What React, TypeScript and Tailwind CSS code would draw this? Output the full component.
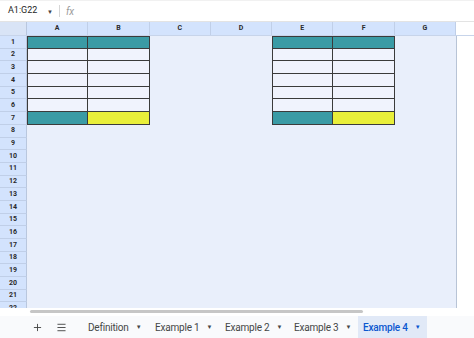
import React from 'react';
import { Plus, Menu } from 'lucide-react';

const COLS = ['A', 'B', 'C', 'D', 'E', 'F', 'G'];
const ROWS = Array.from({ length: 22 }, (_, i) => i + 1);
const TABS = [
  { name: 'Definition', w: 'w-[67px]' },
  { name: 'Example 1', w: 'w-[70px]' },
  { name: 'Example 2', w: 'w-[69px]' },
  { name: 'Example 3', w: 'w-[69px]' },
  { name: 'Example 4', w: 'w-[69px]' },
];

const TEAL = 'bg-[#3a9ba5]';
const YELLOW = 'bg-[#e9ef3a]';

// table in A:B and E:F, rows 1..7
const cellClass = (row: number, col: number) => {
  const inTable = row <= 7 && (col === 0 || col === 1 || col === 4 || col === 5);
  if (!inTable) return 'bg-[#e9effb]';
  const left = col === 0 || col === 4;
  let fill = 'bg-[#f0f3fd]';
  if (row === 1) fill = TEAL;
  if (row === 7) fill = left ? TEAL : YELLOW;
  const borders = [
    'border-b border-b-[#3b3b3b]',
    row === 1 ? 'border-t border-t-[#3b3b3b]' : '',
    'border-r border-r-[#3b3b3b]',
    left ? 'border-l border-l-[#3b3b3b]' : '',
  ].join(' ');
  return `${fill} ${borders}`;
};

export default function App() {
  return (
    <div className="w-[474px] h-[338px] overflow-hidden bg-white flex flex-col font-['Roboto',sans-serif] text-[#1f1f1f]">
      {/* formula bar */}
      <div className="h-[22px] flex items-center border-t border-t-[#f1f1f1] border-b border-b-[#e3e3e3] text-[9px]">
        <span className="w-[47px] pl-[8px]">A1:G22</span>
        <span className="text-[6px] text-[#444]">▼</span>
        <span className="ml-[6px] h-[12px] w-px bg-[#d6d6d6]" />
        <span className="ml-[6px] italic text-[#9a9a9a] font-['Liberation Serif',serif] text-[10px]">fx</span>
      </div>

      {/* column headers */}
      <div className="h-[14px] flex border-b border-b-[#c7d4ea]">
        <div className="w-[27px] shrink-0 bg-[#d9e4f6] border-r border-r-[#b9c7de]" />
        {COLS.map(c => (
          <div
            key={c}
            className="w-[61.3px] shrink-0 bg-[#d3e3fd] border-r border-r-[#c0cfe8] flex items-center justify-center text-[7px] font-bold text-[#2a2a2a]"
          >
            {c}
          </div>
        ))}
        <div className="flex-1 bg-white" />
      </div>

      {/* grid body */}
      <div className="h-[272px] overflow-hidden">
        {ROWS.map(r => (
          <div key={r} className="h-[12.7px] flex">
            <div className="w-[27px] shrink-0 bg-[#d3e3fd] border-r border-r-[#b9c7de] border-b border-b-[#c0cfe8] flex items-center justify-center text-[7px] font-bold text-[#2a2a2a]">
              {r}
            </div>
            {COLS.map((c, ci) => (
              <div key={c} className={`w-[61.3px] shrink-0 ${cellClass(r, ci)}`} />
            ))}
            <div className="flex-1 bg-white border-l border-l-[#b8c4d6]" />
          </div>
        ))}
      </div>

      {/* scrollbar strip */}
      <div className="h-[8px] bg-white pl-[30px] pt-[2px]">
        <div className="w-[333px] h-[3px] rounded-full bg-[#c6c6c6]" />
      </div>

      {/* sheet tabs */}
      <div className="h-[22px] flex items-stretch bg-[#f9fafc] text-[10px] text-[#444746]">
        <div className="w-[83px] shrink-0 flex items-center pl-[32px] gap-[13px] text-[#444]">
          <Plus size={11} strokeWidth={2} />
          <Menu size={11} strokeWidth={2} />
        </div>
        {TABS.map((t, i) => {
          const active = i === TABS.length - 1;
          return (
            <div
              key={t.name}
              className={`${t.w} shrink-0 flex items-center gap-[7px] pl-[5px] ${
                active ? 'bg-[#e1e9f7] text-[#0b57d0] font-medium' : ''
              }`}
            >
              <span className="tracking-[-0.2px]">{t.name}</span>
              <span className="text-[6px] leading-none">▼</span>
            </div>
          );
        })}
      </div>
    </div>
  );
}
